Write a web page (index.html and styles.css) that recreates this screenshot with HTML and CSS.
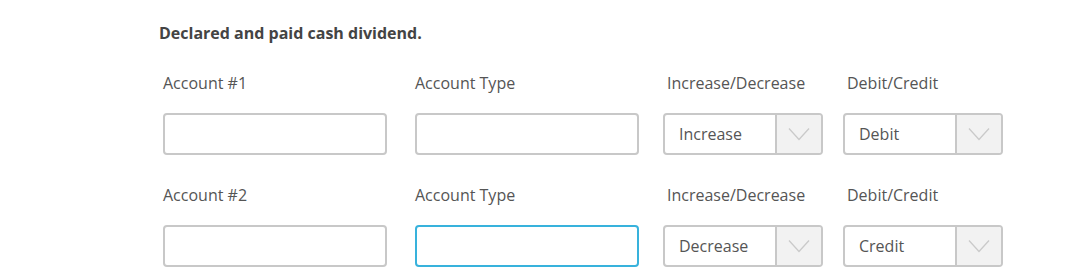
FILE: index.html
```html
<!DOCTYPE html>
<html lang="en">
<head>
    <meta charset="UTF-8">
    <title>Journal Entry</title>
    <link rel="stylesheet" href="styles.css">
</head>
<body>
    <div class="question">
        <p class="prompt">Declared and paid cash dividend.</p>

        <div class="entry-grid">
            <div class="field">
                <label for="account-1">Account #1</label>
                <input type="text" id="account-1" class="text-input">
            </div>
            <div class="field">
                <label for="type-1">Account Type</label>
                <input type="text" id="type-1" class="text-input">
            </div>
            <div class="field field-select">
                <label>Increase/Decrease</label>
                <div class="select-box">
                    <span class="select-value">Increase</span>
                    <span class="select-arrow">
                        <svg width="22" height="14" viewBox="0 0 22 14"><path d="M1 1.5 L11 12.5 L21 1.5" fill="none" stroke="#cacaca" stroke-width="1.3"/></svg>
                    </span>
                </div>
            </div>
            <div class="field field-select">
                <label>Debit/Credit</label>
                <div class="select-box">
                    <span class="select-value">Debit</span>
                    <span class="select-arrow">
                        <svg width="22" height="14" viewBox="0 0 22 14"><path d="M1 1.5 L11 12.5 L21 1.5" fill="none" stroke="#cacaca" stroke-width="1.3"/></svg>
                    </span>
                </div>
            </div>

            <div class="field">
                <label for="account-2">Account #2</label>
                <input type="text" id="account-2" class="text-input">
            </div>
            <div class="field">
                <label for="type-2">Account Type</label>
                <input type="text" id="type-2" class="text-input focused">
            </div>
            <div class="field field-select">
                <label>Increase/Decrease</label>
                <div class="select-box">
                    <span class="select-value">Decrease</span>
                    <span class="select-arrow">
                        <svg width="22" height="14" viewBox="0 0 22 14"><path d="M1 1.5 L11 12.5 L21 1.5" fill="none" stroke="#cacaca" stroke-width="1.3"/></svg>
                    </span>
                </div>
            </div>
            <div class="field field-select">
                <label>Debit/Credit</label>
                <div class="select-box">
                    <span class="select-value">Credit</span>
                    <span class="select-arrow">
                        <svg width="22" height="14" viewBox="0 0 22 14"><path d="M1 1.5 L11 12.5 L21 1.5" fill="none" stroke="#cacaca" stroke-width="1.3"/></svg>
                    </span>
                </div>
            </div>
        </div>
    </div>
</body>
</html>
```

FILE: styles.css
```css
body {
    margin: 0;
    font-family: 'Open Sans', 'DejaVu Sans', sans-serif;
    background-color: #fff;
    color: #555;
}
.question {
    padding: 22px 0 0 159px;
}
.prompt {
    margin: 0 0 29px;
    font-size: 16px;
    font-weight: bold;
    line-height: 22px;
    color: #444;
}
.entry-grid {
    display: grid;
    grid-template-columns: 252px 248px 180px 160px;
    row-gap: 30px;
    padding-left: 4px;
}
.field label {
    display: block;
    font-size: 16px;
    line-height: 20px;
    margin-bottom: 20px;
    color: #555;
}
.field-select label {
    padding-left: 4px;
}
.text-input {
    display: block;
    box-sizing: border-box;
    width: 224px;
    height: 42px;
    border: 2px solid #c8c8c8;
    border-radius: 4px;
    padding: 0 12px;
    font: inherit;
    outline: none;
}
.text-input.focused {
    border-color: #38b2dc;
}
.select-box {
    display: flex;
    box-sizing: border-box;
    width: 160px;
    height: 42px;
    border: 2px solid #c8c8c8;
    border-radius: 4px;
    overflow: hidden;
}
.select-value {
    flex: 1;
    padding-left: 14px;
    font-size: 16px;
    line-height: 38px;
    color: #555;
}
.select-arrow {
    display: flex;
    align-items: center;
    justify-content: center;
    width: 44px;
    background-color: #f2f2f2;
    border-left: 2px solid #c8c8c8;
}
```
